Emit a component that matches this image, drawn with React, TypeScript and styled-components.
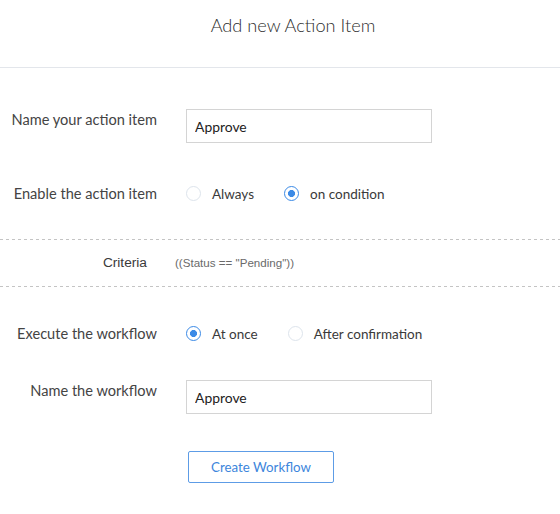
import styled, { createGlobalStyle } from 'styled-components';

const GlobalStyle = createGlobalStyle`
  body {
    margin: 0;
    background: #ffffff;
    font-family: Lato, "Liberation Sans", Arial, sans-serif;
  }
`;

const ActionItemForm = () => {
  return (
    <Page>
      <GlobalStyle />
      <Header>
        <Title>Add new Action Item</Title>
      </Header>
      <Form>
        <FieldRow $top={41} $align="flex-start">
          <Label>Name your action item</Label>
          <TextInput defaultValue="Approve" />
        </FieldRow>
        <FieldRow $top={40} $align="center">
          <Label>Enable the action item</Label>
          <RadioGroup>
            <RadioOption>
              <RadioCircle $checked={false} />
              Always
            </RadioOption>
            <RadioOption>
              <RadioCircle $checked />
              on condition
            </RadioOption>
          </RadioGroup>
        </FieldRow>
        <DashedRule $top={35} />
        <CriteriaRow>
          <CriteriaLabel>Criteria</CriteriaLabel>
          <CriteriaValue>((Status == "Pending"))</CriteriaValue>
        </CriteriaRow>
        <DashedRule $top={14} />
        <FieldRow $top={36} $align="center">
          <Label>Execute the workflow</Label>
          <RadioGroup>
            <RadioOption>
              <RadioCircle $checked />
              At once
            </RadioOption>
            <RadioOption>
              <RadioCircle $checked={false} />
              After confirmation
            </RadioOption>
          </RadioGroup>
        </FieldRow>
        <FieldRow $top={36} $align="flex-start">
          <Label>Name the workflow</Label>
          <TextInput defaultValue="Approve" />
        </FieldRow>
        <ButtonRow>
          <OutlineButton>Create Workflow</OutlineButton>
        </ButtonRow>
      </Form>
    </Page>
  );
};

export default ActionItemForm;

const Page = styled.div`
  width: 560px;
  height: 514px;
  overflow: hidden;
  color: #3a3a3a;
`;

const Header = styled.div`
  height: 68px;
  padding-top: 13px;
  box-sizing: border-box;
  border-bottom: 1px solid #e3e6eb;
`;

const Title = styled.h1`
  margin: 0;
  padding-left: 26px;
  text-align: center;
  font-size: 18.2px;
  line-height: 24px;
  font-weight: 300;
  color: #2e2e2e;
`;

const Form = styled.div`
  display: flex;
  flex-direction: column;
`;

const FieldRow = styled.div<{ $top: number; $align: string }>`
  display: flex;
  align-items: ${(p) => p.$align};
  margin-top: ${(p) => p.$top}px;
`;

const Label = styled.div`
  flex: 0 0 157px;
  margin-right: 29px;
  padding-top: 1px;
  text-align: right;
  font-size: 14.6px;
  line-height: 20px;
  color: #444;
`;

const TextInput = styled.input`
  width: 246px;
  height: 34px;
  box-sizing: border-box;
  border: 1px solid #d4d4d4;
  border-radius: 0;
  padding: 0 8px;
  font-family: Lato, "Liberation Sans", Arial, sans-serif;
  font-size: 13.9px;
  color: #222;
  outline: none;
`;

const RadioGroup = styled.div`
  display: flex;
  align-items: center;
  gap: 30px;
  height: 20px;
`;

const RadioOption = styled.label`
  display: flex;
  align-items: center;
  gap: 11px;
  font-size: 13.5px;
  line-height: 20px;
  color: #3a3a3a;
`;

const RadioCircle = styled.span<{ $checked: boolean }>`
  width: 15px;
  height: 15px;
  box-sizing: border-box;
  border-radius: 50%;
  border: 1px solid ${(p) => (p.$checked ? '#3b8ae6' : '#dde4ec')};
  background: ${(p) =>
    p.$checked ? 'radial-gradient(circle, #3b8ae6 0 3.2px, #ffffff 3.8px)' : '#ffffff'};
`;

const DashedRule = styled.div<{ $top: number }>`
  margin-top: ${(p) => p.$top}px;
  height: 1px;
  background: repeating-linear-gradient(to right, #c4c4c4 0 3px, transparent 3px 6px);
`;

const CriteriaRow = styled.div`
  display: flex;
  align-items: center;
  height: 20px;
  margin-top: 12px;
`;

const CriteriaLabel = styled.div`
  flex: 0 0 147px;
  margin-right: 28px;
  text-align: right;
  font-family: "Liberation Sans", Arial, sans-serif;
  font-size: 13.7px;
  color: #3a3a3a;
`;

const CriteriaValue = styled.div`
  font-family: "Liberation Sans", Arial, sans-serif;
  font-size: 11.6px;
  color: #6a6a6a;
`;

const ButtonRow = styled.div`
  display: flex;
  margin-top: 37px;
  padding-left: 188px;
`;

const OutlineButton = styled.button`
  width: 146px;
  height: 32px;
  box-sizing: border-box;
  border: 1px solid #5d9ce6;
  border-radius: 2px;
  background: #ffffff;
  font-family: Lato, "Liberation Sans", Arial, sans-serif;
  font-size: 13.3px;
  color: #3d86dc;
  cursor: pointer;
`;
